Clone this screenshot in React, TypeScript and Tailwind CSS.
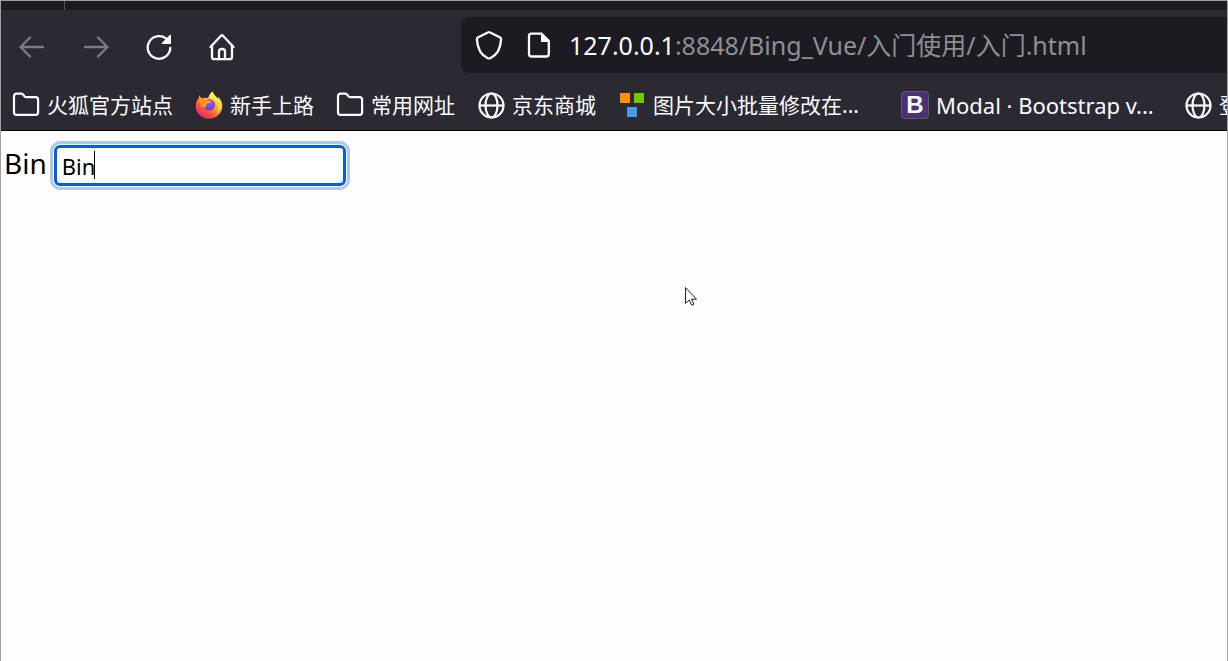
import { useState } from 'react';
import type { ReactNode } from 'react';

function BackIcon() {
  return (
    <svg width="28" height="28" viewBox="0 0 28 28" fill="none" stroke="currentColor" strokeWidth="2.3" strokeLinecap="round" strokeLinejoin="round">
      <path d="M26 14H3.500M13 4.500 3.500 14l9.500 9.500" />
    </svg>
  );
}

function ForwardIcon() {
  return (
    <svg width="28" height="28" viewBox="0 0 28 28" fill="none" stroke="currentColor" strokeWidth="2.3" strokeLinecap="round" strokeLinejoin="round">
      <path d="M4 14h22.500M17 4.500 26.500 14 17 23.500" />
    </svg>
  );
}

function ReloadIcon() {
  return (
    <svg width="28" height="28" viewBox="0 0 28 28" fill="none">
      <path d="M22.6 7.1A11.3 11.3 0 1 0 25.3 15" stroke="currentColor" strokeWidth="2.3" strokeLinecap="round" />
      <path d="M26 2.2V11H17.2a.6.6 0 0 1-.4-1L25 1.8c.4-.3 1 0 1 .4z" fill="currentColor" />
    </svg>
  );
}

function HomeIcon() {
  return (
    <svg width="28" height="28" viewBox="0 0 28 28" fill="none" stroke="currentColor" strokeWidth="2.3" strokeLinecap="round" strokeLinejoin="round">
      <path d="M1.500 14 12 2.800q1-1 2 0L24.500 14" />
      <path d="M3 12.500V24q0 2.200 2.200 2.200h15.600Q23 26.200 23 24V12.500" />
      <path d="M10 26v-7.500Q10 16 13 16t3 2.500V26" />
    </svg>
  );
}

function ShieldIcon() {
  return (
    <svg width="28" height="30" viewBox="0 0 28 30" fill="none" stroke="currentColor" strokeWidth="2.3" strokeLinejoin="round">
      <path d="M12.800 2.500q1.200-.7 2.400 0l9.600 4.700q1.400.7 1.300 2.200C25.600 18 22.500 25 15.200 28.200q-1.200.5-2.400 0C5.500 25 2.400 18 1.900 9.400q-.1-1.500 1.300-2.200z" />
    </svg>
  );
}

function PageIcon() {
  return (
    <svg width="24" height="28" viewBox="0 0 24 28" fill="none">
      <path d="M4.500 2.700H14.500L21.800 10V23q0 2.500-2.500 2.500H4.500Q2 25.500 2 23V5.200Q2 2.700 4.500 2.700z" stroke="currentColor" strokeWidth="2.3" />
      <path d="M14 2v9h8.500z" fill="currentColor" />
    </svg>
  );
}

function FolderIcon() {
  return (
    <svg width="28" height="28" viewBox="0 0 28 28" fill="none" stroke="currentColor" strokeWidth="2.200" strokeLinejoin="round">
      <path d="M2 5.300Q2 2.700 4.600 2.700H9q1.200 0 2 .9l1.700 1.900q.6.600 1.500.6h9.300q2.600 0 2.600 2.600v12.600q0 2.600-2.600 2.600H4.600Q2 23.900 2 21.300z" />
    </svg>
  );
}

function GlobeIcon() {
  return (
    <svg width="28" height="28" viewBox="0 0 28 28" fill="none" stroke="currentColor" strokeWidth="2.200">
      <circle cx="14.500" cy="14.500" r="12" />
      <ellipse cx="14.500" cy="14.500" rx="6" ry="12" />
      <path d="M2.500 14.500h24" />
    </svg>
  );
}

function FirefoxIcon() {
  return (
    <svg width="28" height="28" viewBox="0 0 28 28">
      <defs>
        <linearGradient id="fire" x1="0.850" y1="0.100" x2="0.200" y2="1">
          <stop offset="0" stopColor="#fff44f" />
          <stop offset="0.350" stopColor="#ffb02e" />
          <stop offset="0.650" stopColor="#ff5a36" />
          <stop offset="1" stopColor="#f5127a" />
        </linearGradient>
        <linearGradient id="flame" x1="0.400" y1="0" x2="0.700" y2="1">
          <stop offset="0" stopColor="#fff44f" />
          <stop offset="1" stopColor="#ffc83a" />
        </linearGradient>
        <radialGradient id="core" cx="0.600" cy="0.200" r="0.900">
          <stop offset="0" stopColor="#a84fff" />
          <stop offset="1" stopColor="#5046d8" />
        </radialGradient>
      </defs>
      <path d="M4.500 4.300C5 6 6 7 7 7.500 9 6.500 11 6.500 13 7 14 4 16 1.500 17.800.600 18.200 4 21.500 5.500 23 8c.2-1 0-1.700-.2-2.300C26 8.500 27.300 12 27.300 15A13.300 12.800 0 0 1 .700 15C.700 11 2.300 8.500 3 7.700c.2.300.3.700.4 1 .1-1.700.5-3.200 1.100-4.400z" fill="url(#fire)" />
      <path d="M17.800.600C18.200 4 21.500 5.500 23 8q.6 0-.2-2.300C25.800 9 27 12 26.500 16c-.500 3-2.500 5-5 6 2-4 2-8-.5-11-2-2-6-3-7-3.500C14.500 4.500 16 1.500 17.800.600z" fill="url(#flame)" />
      <circle cx="14.300" cy="13.800" r="5.800" fill="url(#core)" />
      <path d="M4.500 4.300C5 6 6 7.200 7 7.500 9 6.800 12 7 13.800 9.500c1.500.5 2.700.6 2.900 1-.1 1.500-3.700 1.600-4.700 2.500-1 1-.3 3-2.300 3.500C7.500 17 5 13 4 12z" fill="#ff9524" />
    </svg>
  );
}

function SquaresIcon() {
  return (
    <svg width="28" height="28" viewBox="0 0 28 28">
      <path d="M2 2h10v10H2z" fill="#ff9102" />
      <path d="M16 2h10v10H16z" fill="#72c900" />
      <path d="M9 16h10v10H9z" fill="#4798ef" />
    </svg>
  );
}

function BootstrapIcon() {
  return (
    <span className="flex h-7 w-7 items-center justify-center rounded-sm border border-[#65537f] bg-[#4d3272] font-['Liberation_Sans',sans-serif] text-2xl leading-7 font-bold">
      B
    </span>
  );
}

type Bookmark = {
  label: string;
  icon: ReactNode;
  className?: string;
};

const bookmarks: Bookmark[] = [
  { label: '火狐官方站点', icon: <FolderIcon /> },
  { label: '新手上路', icon: <FirefoxIcon /> },
  { label: '常用网址', icon: <FolderIcon /> },
  { label: '京东商城', icon: <GlobeIcon /> },
  { label: '图片大小批量修改在...', icon: <SquaresIcon />, className: 'w-[261px]' },
  { label: 'Modal · Bootstrap v...', icon: <BootstrapIcon />, className: 'w-[261px] text-[22px]' },
  { label: '登', icon: <GlobeIcon /> },
];

function Toolbar() {
  return (
    <div className="flex items-center pt-[7px] text-[#fbfbfe]">
      <div className="flex w-[460px] shrink-0 items-center gap-9 pt-1 pl-4">
        <button aria-label="Back" disabled className="text-[#7b7a82]">
          <BackIcon />
        </button>
        <button aria-label="Forward" disabled className="text-[#7b7a82]">
          <ForwardIcon />
        </button>
        <button aria-label="Reload">
          <ReloadIcon />
        </button>
        <button aria-label="Home">
          <HomeIcon />
        </button>
      </div>
      <div className="flex h-14 min-w-0 flex-1 items-center rounded-l-lg bg-[#1c1b22] pl-3.5">
        <button aria-label="Tracking protection">
          <ShieldIcon />
        </button>
        <button aria-label="Site information" className="ml-6">
          <PageIcon />
        </button>
        <a href="#" className="ml-[18px] text-[25px] leading-8 whitespace-nowrap text-[#8f8f94]">
          <span className="text-[#fbfbfe]">127.0.0.1</span>:8848/Bing_Vue/入门使用/入门.html
        </a>
      </div>
    </div>
  );
}

function BookmarksBar() {
  return (
    <nav className="flex h-[57px] items-center gap-[22px] overflow-hidden pt-[7px] pl-[11px] text-[21px] leading-7 text-[#fbfbfe]">
      {bookmarks.map((item) => (
        <a
          key={item.label}
          href="#"
          className={`flex shrink-0 items-center gap-[7px] whitespace-nowrap ${item.className ?? ''}`}
        >
          <span className="shrink-0">{item.icon}</span>
          {item.label}
        </a>
      ))}
    </nav>
  );
}

export default function App() {
  const [message, setMessage] = useState('Bin');

  return (
    <div className="relative flex min-h-screen flex-col overflow-hidden border-x border-t border-[#a0a0a0] bg-[#fdfdfd] font-['Noto_Sans','Noto_Sans_CJK_SC',sans-serif]">
      <header className="border-b border-black bg-[#2b2a33]">
        <div className="flex h-[9px] bg-[#1c1b22]">
          <div className="w-16 border-r border-[#55545c]" />
        </div>
        <Toolbar />
        <BookmarksBar />
      </header>

      <main className="flex-1 px-[3px] py-3.5">
        <div className="flex items-start gap-[7px]">
          <label htmlFor="message" className="text-[28px] leading-9 text-black">
            {message}
          </label>
          <div className="relative">
            <input
              id="message"
              type="text"
              value={message}
              onChange={(e) => setMessage(e.target.value)}
              className="block h-[41px] w-[292px] rounded-md border-3 border-[#0061e0] bg-white pl-[5px] text-[22px] text-black caret-transparent ring-3 ring-[#b2c8eb] ring-offset-1 ring-offset-white outline-none"
            />
            <span className="absolute top-1.5 left-10 h-7 w-px bg-black" />
          </div>
        </div>
      </main>

      <svg className="pointer-events-none absolute top-[286px] left-[684px]" width="14" height="20" viewBox="0 0 14 20">
        <path d="M.5.500v16l3.700-3.500 2.500 5.200 2.200-1-2.400-5H11.500z" fill="#fff" stroke="#222" strokeWidth="1" />
      </svg>
    </div>
  );
}
